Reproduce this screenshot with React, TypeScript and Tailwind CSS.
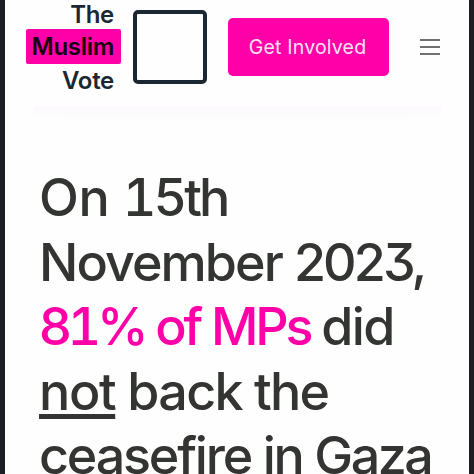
function Logo() {
  return (
    <div className="flex items-start">
      <div className="flex w-[95px] flex-col items-end text-[24px] leading-[34px] font-semibold tracking-[-0.3px] text-[#1b2833]">
        <span className="-mt-[2px] h-[31px] pr-[7px]">The</span>
        <span className="flex h-[35px] w-[95px] items-center justify-end rounded-[2px] bg-[#ff00a8] pr-[7px] text-[#16000f]">
          Muslim
        </span>
        <span className="pr-[7px]">Vote</span>
      </div>
      <div className="mt-[10px] ml-3 size-[74px] rounded-[5px] border-4 border-[#1b2833]" />
    </div>
  );
}

function MenuButton() {
  return (
    <button aria-label="Menu" className="mt-[39px] ml-[31px] flex h-4 w-5 flex-col justify-between">
      <span className="h-[2px] w-full bg-[#717171]" />
      <span className="h-[2px] w-full bg-[#717171]" />
      <span className="h-[2px] w-full bg-[#717171]" />
    </button>
  );
}

export default function App() {
  return (
    <div className="h-[474px] w-[474px] overflow-hidden border-x-[5px] border-[#1b1f24] bg-[#fefefe] font-['Inter',sans-serif]">
      <header className="flex h-[106px] items-start pl-[21px]">
        <Logo />
        <button className="mt-[18px] ml-[21px] h-[58px] w-[161px] shrink-0 rounded-[5px] bg-[#ff00a8] pr-0.5 pb-px pt-[3px] text-[19.5px] tracking-[0.2px] whitespace-nowrap text-[#ffe3f6]">
          Get Involved
        </button>
        <MenuButton />
      </header>
      <div className="mx-7 h-[17px] rounded-b-[50%] bg-linear-to-b from-[#fcfafc] to-[#fefefe]" />

      <h1 className="mt-[43px] flex flex-col pl-[34px] text-[52px] leading-[64.6px] font-[550] whitespace-nowrap text-[#323532] [font-feature-settings:'cv09']">
        <span className="tracking-[-0.4px]">
          On <span className="tracking-[-3px] [font-feature-settings:'tnum']">15th</span>
        </span>
        <span className="tracking-[-1.9px]">
          November <span className="tracking-[-2.9px]">2023,</span>
        </span>
        <span className="tracking-[-3.1px]">
          <span className="text-[#ff00a8]">
            <span className="tracking-[-4.2px]">
              8<span className="[font-feature-settings:'tnum']">1</span>%
            </span>{" "}
            of MPs
          </span>{" "}
          <span className="tracking-[-1.6px]">did</span>
        </span>
        <span className="tracking-[-1.7px]">
          <span className="tracking-[-1.4px] underline decoration-[5px] underline-offset-[4px] [text-decoration-skip-ink:none]">not</span> back the
        </span>
        <span className="tracking-[-2.2px]">
          ceasefire in <span className="tracking-[-2.5px]">Gaza</span>
        </span>
      </h1>
    </div>
  );
}
